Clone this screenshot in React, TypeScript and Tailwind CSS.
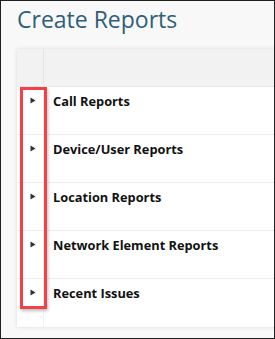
import React from "react";

const reports = [
  "Call Reports",
  "Device/User Reports",
  "Location Reports",
  "Network Element Reports",
  "Recent Issues",
];

function Caret() {
  return (
    <svg width="6" height="7" viewBox="0 0 6 7" className="block">
      <path d="M0.5 0.5 L5.5 3.5 L0.5 6.5 Z" fill="#333" />
    </svg>
  );
}

export default function App() {
  return (
    <div
      className="relative w-[275px] h-[339px] overflow-hidden border border-[#1f1f1f] bg-[#f8f8f8]"
      style={{ fontFamily: "'Open Sans', 'Liberation Sans', sans-serif" }}
    >
      <h1 className="pl-[16px] pt-[2px] h-[48px] text-[23px] leading-[32px] font-normal text-[#2f5f78]">
        Create Reports
      </h1>

      {/* Reports table */}
      <div className="ml-[16px] w-[290px] bg-white shadow-[0_0_4px_rgba(0,0,0,0.12)]">
        <div className="flex h-[38px] bg-[#f2f2f2] border-b border-[#e8e8e8]">
          <div className="w-[27px] border-r border-[#e4e4e4]" />
          <div className="flex-1" />
        </div>
        {reports.map((r, i) => (
          <div
            key={r}
            className={`flex h-[48px] ${i < reports.length - 1 ? "border-b border-[#ececec]" : ""}`}
          >
            <div className="w-[27px] border-r border-[#f2f2f2] flex justify-end pr-[7px] pt-[10px]">
              <Caret />
            </div>
            <div className="flex-1 pl-[9px] pt-[5px] text-[12.8px] leading-[18px] font-bold text-[#111]">
              {r}
            </div>
          </div>
        ))}
      </div>

      {/* Highlight box */}
      <div className="absolute left-[19px] top-[86px] w-[27px] h-[222px] border-[3px] border-[#ef4348] shadow-[1px_2px_3px_rgba(0,0,0,0.25)]" />
    </div>
  );
}
